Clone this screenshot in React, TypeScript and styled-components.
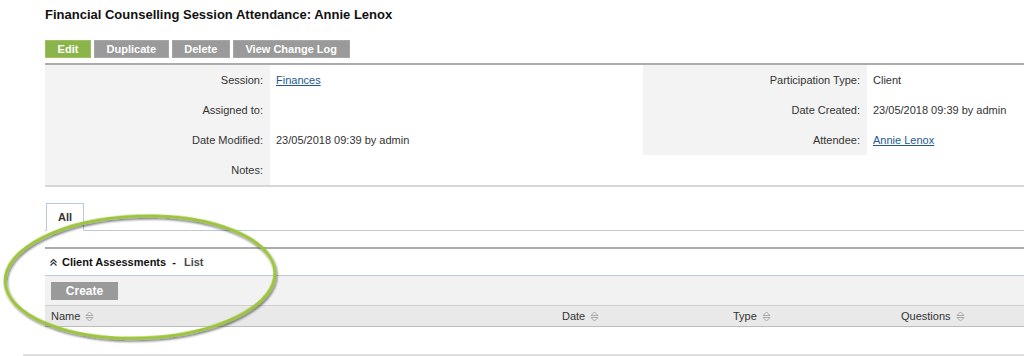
import React from "react";
import styled, { createGlobalStyle } from "styled-components";

const Global = createGlobalStyle`
  html, body { margin: 0; padding: 0; background: #fff; }
  body { font-family: "Liberation Sans", Arial, Helvetica, sans-serif; color: #222; overflow: hidden; }
`;

const Page = styled.div`
  position: relative;
  width: 1024px;
  height: 356px;
  overflow: hidden;
  padding: 7px 0 0 45px;
  box-sizing: border-box;
`;

const Title = styled.h1`
  margin: 0;
  font-size: 13px;
  line-height: 16px;
  font-weight: bold;
  color: #111;
`;

const ButtonRow = styled.div`
  display: flex;
  gap: 3px;
  margin-top: 17px;
`;

const ActionButton = styled.button<{ $primary?: boolean }>`
  height: 18px;
  padding: 0 11.6px;
  border: 1px solid ${(p) => (p.$primary ? "#9cc25c" : "#a6a6a6")};
  background: ${(p) => (p.$primary ? "#8bb44a" : "#9a9a9a")};
  color: #fff;
  font-family: inherit;
  font-size: 11px;
  font-weight: bold;
  line-height: 16px;
  cursor: pointer;
`;

const Divider = styled.div`
  margin-top: 5px;
  height: 2px;
  background: #acacac;
`;

const Details = styled.div`
  display: grid;
  grid-template-columns: 225px 373px 224px 1fr;
  grid-auto-rows: 30px;
  border-bottom: 2px solid #d6d6d6;
`;

const Label = styled.div<{ $blank?: boolean }>`
  background: ${(p) => (p.$blank ? "#fff" : "#f3f3f3")};
  text-align: right;
  padding-right: 7px;
  font-size: 11px;
  line-height: 30px;
  color: #333;
`;

const Value = styled.div`
  padding-left: 6px;
  font-size: 11px;
  line-height: 30px;
  color: #333;
  white-space: nowrap;
`;

const Link = styled.a`
  color: #24588e;
  text-decoration: underline;
`;

const TabBar = styled.div`
  display: flex;
  margin-top: 16px;
  border-bottom: 1px solid #b7c9dc;
`;

const Tab = styled.div`
  height: 28px;
  padding: 0 11px;
  margin-left: 1px;
  margin-bottom: -1px;
  border: 1px solid #b7c9dc;
  border-bottom: 1px solid #fff;
  background: #fff;
  font-size: 11px;
  font-weight: bold;
  line-height: 27px;
  color: #333;
  box-sizing: border-box;
`;

const Section = styled.div`
  margin-top: 16px;
  border-top: 2px solid #ababab;
`;

const SectionHeader = styled.div`
  display: flex;
  align-items: center;
  height: 26px;
  padding-left: 4px;
  gap: 4px;
  font-size: 11px;
  font-weight: bold;
  color: #111;
`;

const SubTitle = styled.span`
  color: #4a4a4a;
  margin-left: 4px;
`;

const Toolbar = styled.div`
  border-top: 1px solid #b7c9dc;
  background: #f2f2f2;
  padding: 5px 6px;
`;

const CreateButton = styled.button`
  height: 18px;
  width: 67px;
  border: none;
  background: #9a9a9a;
  color: #fff;
  font-family: inherit;
  font-size: 12px;
  font-weight: bold;
  line-height: 18px;
  padding: 0;
`;

const HeaderRow = styled.div`
  display: grid;
  grid-template-columns: 511px 171px 168px 1fr;
  height: 20px;
  padding-left: 6px;
  background: #e9e9e9;
  border-top: 1px solid #cfcfcf;
  border-bottom: 1px solid #bdbdbd;
`;

const HeaderCell = styled.div`
  display: flex;
  align-items: center;
  gap: 5px;
  font-size: 11px;
  color: #333;
`;

const BottomLine = styled.div`
  margin-top: 27px;
  margin-left: -22px;
  height: 2px;
  background: #dedede;
`;

const Highlight = styled.svg`
  position: absolute;
  left: 0;
  top: 200px;
  pointer-events: none;
`;

const SortIcon = () => (
  <svg width="9" height="11" viewBox="0 0 9 11">
    <path d="M1 4.5 L4.5 1 L8 4.5 Z" fill="none" stroke="#a8a8a8" strokeWidth="1" strokeLinejoin="round" />
    <path d="M1 6.5 L4.5 10 L8 6.5 Z" fill="none" stroke="#a8a8a8" strokeWidth="1" strokeLinejoin="round" />
  </svg>
);

const CollapseIcon = () => (
  <svg width="9" height="9" viewBox="0 0 9 9">
    <path d="M1.5 4.5 L4.5 1.5 L7.5 4.5" fill="none" stroke="#333" strokeWidth="1.2" />
    <path d="M1.5 7.5 L4.5 4.5 L7.5 7.5" fill="none" stroke="#333" strokeWidth="1.2" />
  </svg>
);

export default function App() {
  return (
    <>
      <Global />
      <Page>
        <Title>Financial Counselling Session Attendance: Annie Lenox</Title>
        <ButtonRow>
          <ActionButton $primary>Edit</ActionButton>
          <ActionButton>Duplicate</ActionButton>
          <ActionButton>Delete</ActionButton>
          <ActionButton>View Change Log</ActionButton>
        </ButtonRow>
        <Divider />
        <Details>
          <Label>Session:</Label>
          <Value><Link href="#">Finances</Link></Value>
          <Label>Participation Type:</Label>
          <Value>Client</Value>

          <Label>Assigned to:</Label>
          <Value />
          <Label>Date Created:</Label>
          <Value>23/05/2018 09:39 by admin</Value>

          <Label>Date Modified:</Label>
          <Value>23/05/2018 09:39 by admin</Value>
          <Label>Attendee:</Label>
          <Value><Link href="#">Annie Lenox</Link></Value>

          <Label>Notes:</Label>
          <Value />
          <Label $blank />
          <Value />
        </Details>
        <TabBar>
          <Tab>All</Tab>
        </TabBar>
        <Section>
          <SectionHeader>
            <CollapseIcon />
            <span>Client Assessments&nbsp; -</span>
            <SubTitle>List</SubTitle>
          </SectionHeader>
          <Toolbar>
            <CreateButton>Create</CreateButton>
          </Toolbar>
          <HeaderRow>
            <HeaderCell>Name <SortIcon /></HeaderCell>
            <HeaderCell>Date <SortIcon /></HeaderCell>
            <HeaderCell>Type <SortIcon /></HeaderCell>
            <HeaderCell>Questions <SortIcon /></HeaderCell>
          </HeaderRow>
        </Section>
        <BottomLine />
        <Highlight width="300" height="156" viewBox="0 0 300 156">
          <defs>
            <filter id="shadow" x="-10%" y="-20%" width="120%" height="140%">
              <feDropShadow dx="1" dy="2" stdDeviation="1.2" floodColor="#000" floodOpacity="0.55" />
            </filter>
          </defs>
          <ellipse
            cx="140"
            cy="77"
            rx="135"
            ry="61"
            transform="rotate(-2 140 77)"
            fill="none"
            stroke="#9cc53a"
            strokeWidth="3"
            filter="url(#shadow)"
          />
        </Highlight>
      </Page>
    </>
  );
}
